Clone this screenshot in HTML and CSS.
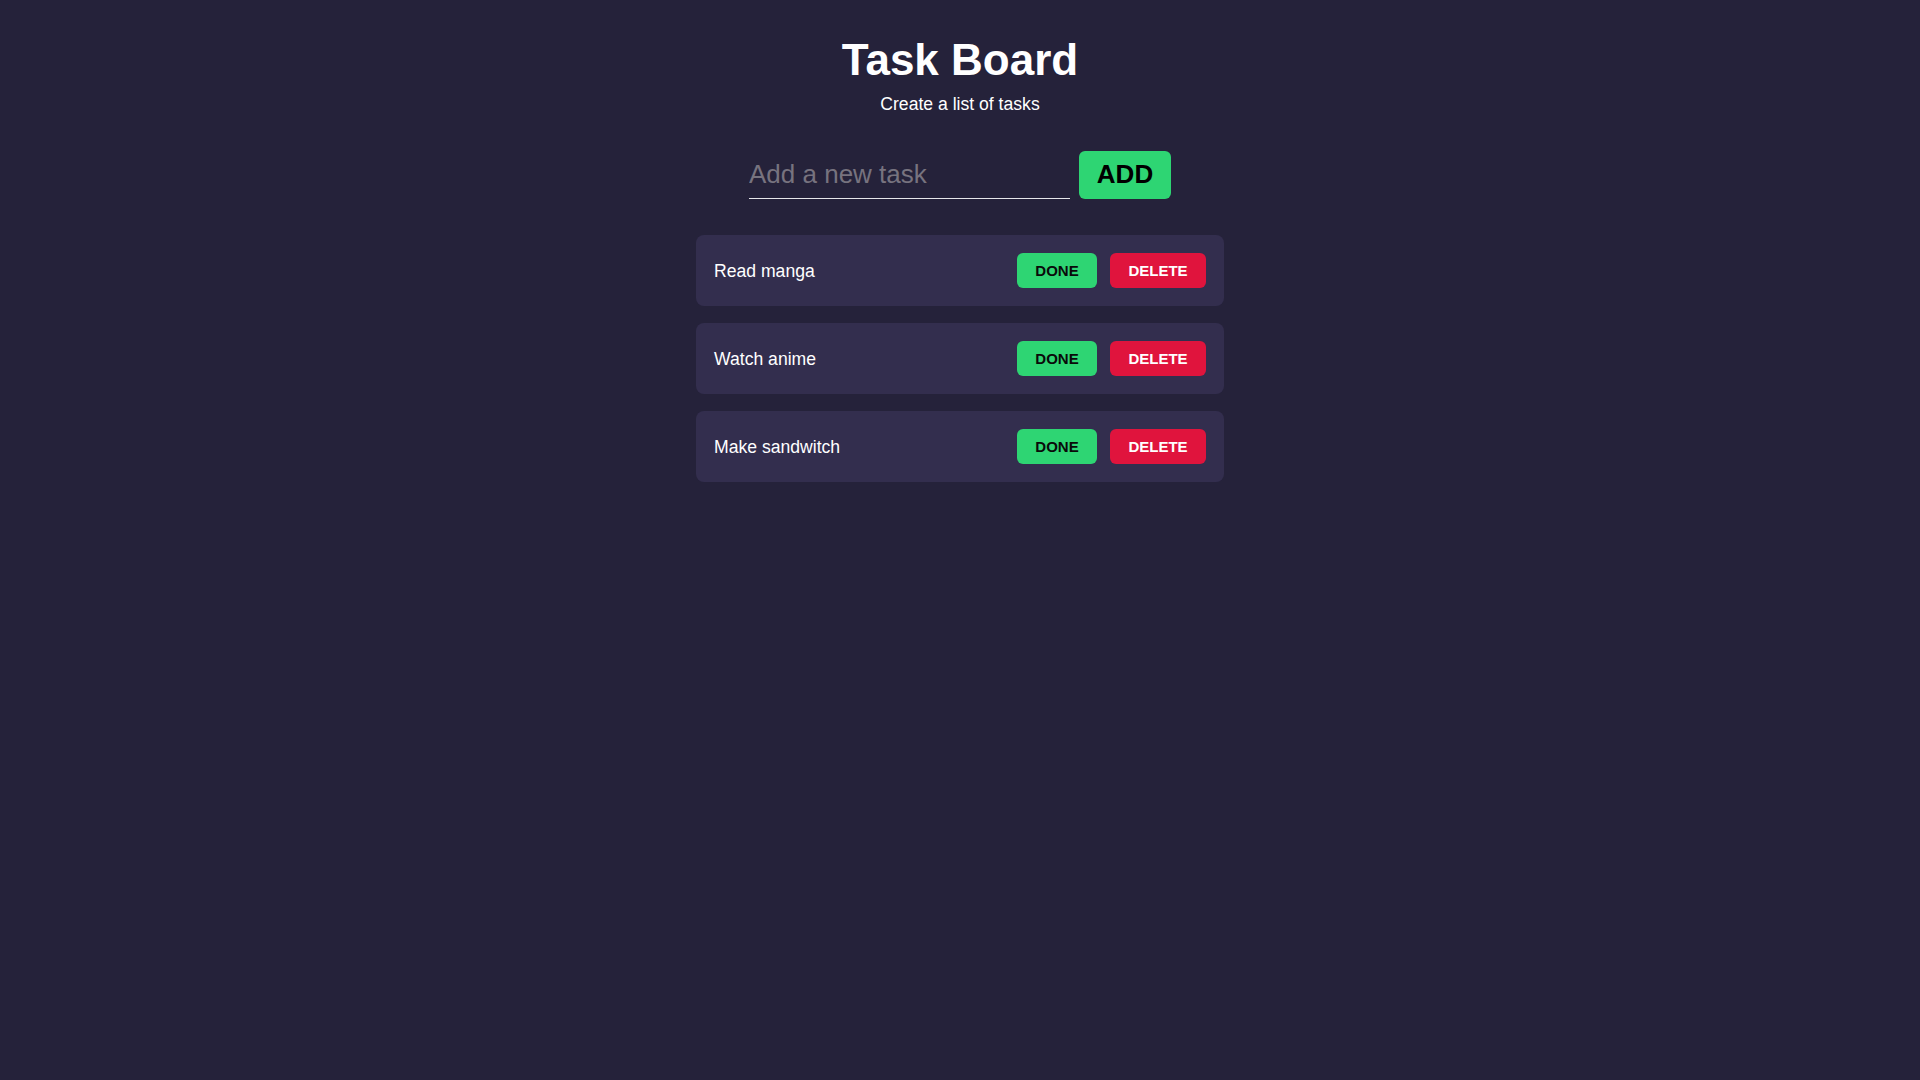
FILE: index.html
```html
<!DOCTYPE html>
<html lang="en">
<head>
<meta charset="utf-8">
<title>Task Board</title>
<link rel="stylesheet" href="styles.css">
</head>
<body>
<main class="app">
  <header class="header">
    <h1 class="title">Task Board</h1>
    <p class="subtitle">Create a list of tasks</p>
  </header>
  <form class="add-form">
    <input class="add-input" type="text" placeholder="Add a new task">
    <button class="add-btn" type="button">ADD</button>
  </form>
  <ul class="task-list">
    <li class="task">
      <span class="task-name">Read manga</span>
      <div class="task-actions">
        <button class="btn btn-done" type="button">DONE</button>
        <button class="btn btn-delete" type="button">DELETE</button>
      </div>
    </li>
    <li class="task">
      <span class="task-name">Watch anime</span>
      <div class="task-actions">
        <button class="btn btn-done" type="button">DONE</button>
        <button class="btn btn-delete" type="button">DELETE</button>
      </div>
    </li>
    <li class="task">
      <span class="task-name">Make sandwitch</span>
      <div class="task-actions">
        <button class="btn btn-done" type="button">DONE</button>
        <button class="btn btn-delete" type="button">DELETE</button>
      </div>
    </li>
  </ul>
</main>
</body>
</html>
```

FILE: styles.css
```css
* {
  box-sizing: border-box;
}

html, body {
  margin: 0;
  padding: 0;
}

body {
  background: #25223a;
  color: #ffffff;
  font-family: "Liberation Sans", Arial, sans-serif;
  min-height: 100vh;
}

.app {
  display: flex;
  flex-direction: column;
  align-items: center;
  padding-top: 35px;
}

.header {
  text-align: center;
}

.title {
  margin: 0;
  font-size: 44px;
  font-weight: 700;
  line-height: 1.15;
  color: #ffffff;
}

.subtitle {
  margin: 8.5px 0 0;
  font-size: 17.6px;
  line-height: 1.15;
  color: #ffffff;
}

.add-form {
  display: flex;
  align-items: stretch;
  gap: 9px;
  margin-top: 37px;
}

.add-input {
  width: 321px;
  height: 48px;
  padding: 0;
  background: transparent;
  border: none;
  border-bottom: 1px solid #e6e6ea;
  color: #ffffff;
  font-family: "Liberation Sans", Arial, sans-serif;
  font-size: 26px;
  outline: none;
}

.add-input::placeholder {
  color: #77737f;
}

.add-btn {
  width: 92px;
  height: 48px;
  padding: 0;
  border: none;
  border-radius: 6px;
  background: #2ed573;
  color: #000000;
  font-family: "Liberation Sans", Arial, sans-serif;
  font-size: 26px;
  font-weight: 700;
  line-height: 1.15;
}

.task-list {
  list-style: none;
  margin: 36px 0 0;
  padding: 0;
  width: 528px;
  display: flex;
  flex-direction: column;
  gap: 17px;
}

.task {
  display: flex;
  align-items: center;
  justify-content: space-between;
  height: 71px;
  padding: 0 18px 0 18px;
  background: #332e4e;
  border-radius: 8px;
}

.task-name {
  font-size: 17.6px;
  line-height: 1.15;
  color: #ffffff;
}

.task-actions {
  display: flex;
  gap: 13px;
}

.btn {
  height: 35px;
  padding: 0;
  border: none;
  border-radius: 6px;
  font-family: "Liberation Sans", Arial, sans-serif;
  font-size: 15px;
  font-weight: 700;
  line-height: 1.15;
}

.btn-done {
  width: 80px;
  background: #2ed573;
  color: #0a0a0a;
}

.btn-delete {
  width: 96px;
  background: #e0143d;
  color: #ffffff;
}
```
